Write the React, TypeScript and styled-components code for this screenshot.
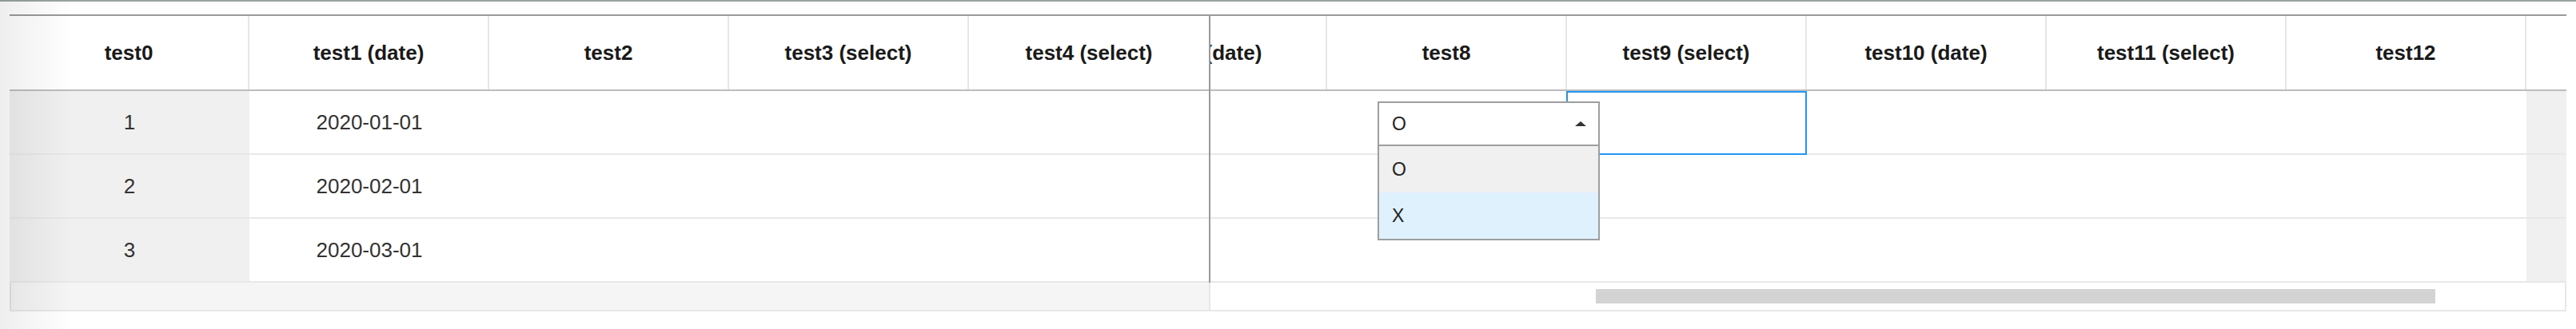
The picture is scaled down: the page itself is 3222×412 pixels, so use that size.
import React from 'react';
import styled, { createGlobalStyle } from 'styled-components';

const GlobalStyle = createGlobalStyle`
  html, body { margin: 0; padding: 0; background: #fff; }
  body { font-family: "Liberation Sans", Arial, Helvetica, sans-serif; }
`;

const TopBar = styled.div`
  height: 2px;
  background: #98a49e;
`;

const Page = styled.div`
  padding: 16px 12px 0;
`;

const Shade = styled.div`
  position: fixed;
  left: 0;
  top: 0;
  bottom: 0;
  width: 90px;
  pointer-events: none;
  z-index: 20;
  background: linear-gradient(to right, rgba(0, 0, 0, 0.065), rgba(0, 0, 0, 0));
`;

const Table = styled.div`
  width: 3198px;
  border-top: 2px solid #9a9a9a;
`;

const Panes = styled.div`
  display: flex;
`;

const FrozenPane = styled.div`
  width: 1500px;
  flex: none;
`;

const Divider = styled.div<{ $light?: boolean }>`
  width: 2px;
  flex: none;
  background: ${(p) => (p.$light ? '#e6e6e6' : '#9a9a9a')};
`;

const ScrollPane = styled.div`
  flex: 1;
  min-width: 0;
  overflow: hidden;
`;

const ScrollContent = styled.div<{ $offset: number }>`
  width: max-content;
  margin-left: ${(p) => -p.$offset}px;
`;

const HeaderRow = styled.div`
  display: flex;
  height: 92px;
  border-bottom: 2px solid #bdbdbd;
`;

const HeaderCell = styled.div<{ $last?: boolean }>`
  width: 300px;
  flex: none;
  box-sizing: border-box;
  border-right: ${(p) => (p.$last ? 'none' : '2px solid #e6e6e6')};
  display: flex;
  align-items: center;
  justify-content: center;
  font-weight: bold;
  font-size: 26px;
  color: #1a1a1a;
  white-space: nowrap;
`;

const Gutter = styled.div<{ $body?: boolean }>`
  width: 50px;
  flex: none;
  background: ${(p) => (p.$body ? '#f0f0f0' : '#fff')};
`;

const BodyRow = styled.div`
  display: flex;
  height: 78px;
  border-bottom: 2px solid #e8e8e8;
`;

const BodyCell = styled.div<{ $index?: boolean; $selected?: boolean }>`
  position: relative;
  width: 300px;
  flex: none;
  display: flex;
  align-items: center;
  justify-content: center;
  font-size: 26px;
  color: #333;
  background: ${(p) => (p.$index ? '#f0f0f0' : '#fff')};
  &::after {
    content: '';
    display: ${(p) => (p.$selected ? 'block' : 'none')};
    position: absolute;
    left: -1px;
    top: 0;
    right: 0;
    bottom: -2px;
    border: 2px solid #2196f3;
    pointer-events: none;
  }
`;

const Dropdown = styled.div`
  position: absolute;
  left: 63px;
  top: 13px;
  z-index: 5;
  width: 278px;
  box-sizing: border-box;
  border: 2px solid #9e9e9e;
  background: #fff;
  font-family: "Liberation Sans", Arial, sans-serif;
  font-size: 23px;
  color: #222;
`;

const SelectBox = styled.div`
  height: 52px;
  border-bottom: 2px solid #9e9e9e;
  display: flex;
  align-items: center;
  justify-content: space-between;
  padding: 0 15px 0 16px;
`;

const Caret = styled.span`
  width: 0;
  height: 0;
  border-left: 7px solid transparent;
  border-right: 7px solid transparent;
  border-bottom: 6px solid #333;
`;

const Option = styled.div<{ $active?: boolean }>`
  height: 58px;
  display: flex;
  align-items: center;
  padding: 0 16px;
  background: ${(p) => (p.$active ? '#dff1fc' : '#f0f0f0')};
`;

const ScrollRow = styled.div`
  display: flex;
  height: 34px;
  border-bottom: 2px solid #e8e8e8;
`;

const FrozenScroll = styled.div`
  width: 1500px;
  flex: none;
  box-sizing: border-box;
  border-left: 2px solid #e2e2e2;
  background: #f5f5f5;
`;

const ScrollTrack = styled.div`
  flex: 1;
  border-right: 2px solid #e8e8e8;
  padding: 8px 0 0 482px;
`;

const Thumb = styled.div`
  width: 1050px;
  height: 18px;
  background: #d3d3d3;
`;

const frozenCols = ['test0', 'test1 (date)', 'test2', 'test3 (select)', 'test4 (select)'];
const scrollCols = [
  'test5',
  'test6',
  'test7 (date)',
  'test8',
  'test9 (select)',
  'test10 (date)',
  'test11 (select)',
  'test12',
];

const rows = [
  { id: '1', date: '2020-01-01' },
  { id: '2', date: '2020-02-01' },
  { id: '3', date: '2020-03-01' },
];

export default function App() {
  return (
    <>
      <GlobalStyle />
      <TopBar />
      <Shade />
      <Page>
        <Table>
          <Panes>
            <FrozenPane>
              <HeaderRow>
                {frozenCols.map((c, i) => (
                  <HeaderCell key={c} $last={i === frozenCols.length - 1}>
                    {c}
                  </HeaderCell>
                ))}
              </HeaderRow>
              {rows.map((r) => (
                <BodyRow key={r.id}>
                  <BodyCell $index>{r.id}</BodyCell>
                  <BodyCell>{r.date}</BodyCell>
                  <BodyCell />
                  <BodyCell />
                  <BodyCell />
                </BodyRow>
              ))}
            </FrozenPane>
            <Divider />
            <ScrollPane>
              <ScrollContent $offset={754}>
                <HeaderRow>
                  {scrollCols.map((c) => (
                    <HeaderCell key={c}>{c}</HeaderCell>
                  ))}
                  <Gutter />
                </HeaderRow>
                {rows.map((r, ri) => (
                  <BodyRow key={r.id}>
                    {scrollCols.map((c) => (
                      <BodyCell key={c} $selected={ri === 0 && c === 'test9 (select)'}>
                        {ri === 0 && c === 'test8' && (
                          <Dropdown>
                            <SelectBox>
                              <span>O</span>
                              <Caret />
                            </SelectBox>
                            <Option>O</Option>
                            <Option $active>X</Option>
                          </Dropdown>
                        )}
                      </BodyCell>
                    ))}
                    <Gutter $body />
                  </BodyRow>
                ))}
              </ScrollContent>
            </ScrollPane>
          </Panes>
          <ScrollRow>
            <FrozenScroll />
            <Divider $light />
            <ScrollTrack>
              <Thumb />
            </ScrollTrack>
          </ScrollRow>
        </Table>
      </Page>
    </>
  );
}
